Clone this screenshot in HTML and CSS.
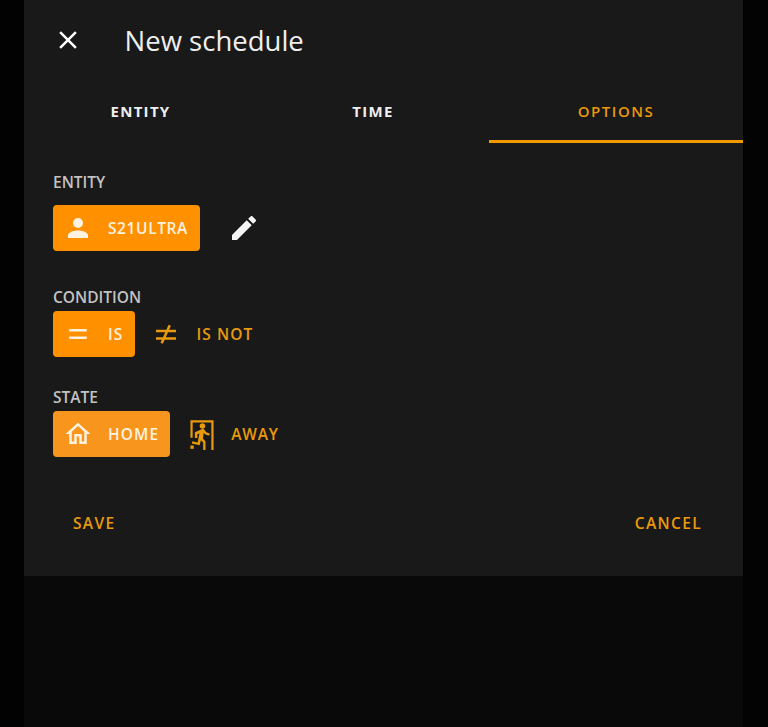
FILE: index.html
```html
<!DOCTYPE html>
<html lang="en">
<head>
    <meta charset="UTF-8">
    <meta name="viewport" content="width=device-width, initial-scale=1.0">
    <title>New schedule</title>
    <link rel="stylesheet" href="styles.css">
</head>
<body>
    <div class="dialogo">
        <header class="cabecera">
            <svg class="icono icono-cerrar" viewBox="0 0 24 24"><path d="M19,6.41L17.59,5L12,10.59L6.41,5L5,6.41L10.59,12L5,17.59L6.41,19L12,13.41L17.59,19L19,17.59L13.41,12L19,6.41Z"/></svg>
            <h1 class="titulo">New schedule</h1>
        </header>

        <nav class="pestanas">
            <div class="pestana">ENTITY</div>
            <div class="pestana">TIME</div>
            <div class="pestana activa">OPTIONS</div>
        </nav>

        <!-- Entity -->
        <div class="etiqueta etiqueta-entidad">ENTITY</div>
        <div class="fila">
            <div class="boton marcado">
                <svg class="icono" viewBox="0 0 24 24"><path d="M12,4A4,4 0 0,1 16,8A4,4 0 0,1 12,12A4,4 0 0,1 8,8A4,4 0 0,1 12,4M12,14C16.42,14 20,15.79 20,18V20H4V18C4,15.79 7.58,14 12,14Z"/></svg>
                <span class="texto-entidad">S21ULTRA</span>
            </div>
            <svg class="icono-editar" viewBox="0 0 24 24"><path d="M20.71,7.04C21.1,6.65 21.1,6 20.71,5.63L18.37,3.29C18,2.9 17.35,2.9 16.96,3.29L15.12,5.12L18.87,8.87M3,17.25V21H6.75L17.81,9.93L14.06,6.18L3,17.25Z"/></svg>
        </div>

        <!-- Condition -->
        <div class="etiqueta etiqueta-condicion">CONDITION</div>
        <div class="fila">
            <div class="boton marcado">
                <svg class="icono" viewBox="0 0 24 24"><path d="M19,10H5V8H19V10M19,16H5V14H19V16Z"/></svg>
                <span>IS</span>
            </div>
            <div class="boton">
                <svg class="icono" viewBox="0 0 24 24"><path d="M14.08,4.61L15.92,5.39L14.5,8.5H20V10.5H13.6L11.8,14.5H20V16.5H10.9L9.42,19.78L7.58,18.97L8.7,16.5H4V14.5H9.6L11.4,10.5H4V8.5H12.3L14.08,4.61Z"/></svg>
                <span>IS NOT</span>
            </div>
        </div>

        <!-- State -->
        <div class="etiqueta etiqueta-estado">STATE</div>
        <div class="fila">
            <div class="boton marcado boton-casa">
                <svg class="icono" viewBox="0 0 24 24"><path d="M12 5.69L17 10.19V18H15V12H9V18H7V10.19L12 5.69M12 3L2 12H5V20H11V14H13V20H19V12H22L12 3Z"/></svg>
                <span>HOME</span>
            </div>
            <div class="boton boton-puerta">
                <svg class="icono icono-puerta" viewBox="2 0 27 30">
                    <path d="M5 18V2H26V29H24V4H7V18Z"/>
                    <path d="M5 25H8V28H5Z"/>
                    <g transform="translate(-2.5 -2.5) scale(1.15)">
                        <circle cx="16" cy="8.5" r="2.2"/>
                        <path d="M14.5 11.5L10 13.5V18H12V15L13.6 14.4L12.2 21.5L8 20.6L7.6 22.4L13.8 23.8L14.8 19.8L16.6 21.6V27.5H18.4V20.6L16.4 18.6L17 13.8C18 15.2 19.6 16 21.6 16V14.2C20 14.2 18.8 13.4 18 12L17 10.8C16.3 10.6 15.4 11 14.5 11.5Z"/>
                    </g>
                </svg>
                <span>AWAY</span>
            </div>
        </div>

        <footer class="acciones">
            <div class="accion">SAVE</div>
            <div class="accion">CANCEL</div>
        </footer>
    </div>
</body>
</html>
```

FILE: styles.css
```css
html, body {
    height: 100%;
}

body {
    margin: 0;
    overflow: hidden;
    background-color: #090909;
    font-family: "Open Sans", "Liberation Sans", sans-serif;
    border-left: 24px solid #020202;
    border-right: 25px solid #030303;
}

.dialogo {
    height: 576px;
    background-color: #191919;
    box-sizing: border-box;
}

.cabecera {
    display: flex;
    align-items: center;
    height: 80px;
    padding-left: 28px;
    color: #fff;
}

.icono-cerrar {
    width: 32px;
    height: 32px;
    margin-left: 1px;
    fill: #f5f5f5;
}

.titulo {
    margin: 0 0 0 41.5px;
    font-size: 27.5px;
    font-weight: 400;
    color: #eeeeee;
}

.pestanas {
    display: grid;
    grid-template-columns: 233px 232px 254px;
    height: 63px;
}

.pestana {
    display: flex;
    align-items: center;
    justify-content: center;
    padding-top: 2px;
    font-size: 15px;
    font-weight: 700;
    letter-spacing: 1.3px;
    color: #eeeeee;
    border-bottom: 3px solid transparent;
}

.pestana.activa {
    color: #e99a0c;
    font-weight: 600;
    letter-spacing: 1.5px;
    border-bottom-color: #f29b00;
}

.etiqueta {
    margin-left: 29px;
    font-size: 15.5px;
    font-weight: 600;
    line-height: 18px;
    color: #c2c2c2;
}

.etiqueta-entidad {
    margin-top: 30px;
    margin-bottom: 14px;
}

.etiqueta-condicion {
    margin-top: 37px;
    margin-bottom: 5px;
}

.etiqueta-estado {
    margin-top: 31px;
    margin-bottom: 5px;
}

.fila {
    display: flex;
    align-items: center;
    gap: 6px;
    margin-left: 29px;
}

.boton {
    display: flex;
    align-items: center;
    gap: 15px;
    height: 46px;
    padding: 0 12px 0 10px;
    border-radius: 4px;
    font-size: 15.5px;
    font-weight: 600;
    letter-spacing: 1.1px;
    color: #e99a0c;
}

.boton.marcado {
    background-color: #ff9100;
    color: #fff2e0;
}

.boton-casa.marcado {
    background-color: #f8951c;
    padding-right: 11px;
}

.boton-puerta {
    gap: 14px;
    padding-left: 11px;
    letter-spacing: 0.8px;
}

.texto-entidad {
    letter-spacing: 0.6px;
}

.icono {
    flex: none;
    width: 30px;
    height: 30px;
    fill: currentColor;
}

.icono-puerta {
    height: 33px;
}

.icono-editar {
    width: 32px;
    height: 32px;
    margin-left: 22px;
    fill: #f5f5f5;
}

.acciones {
    display: flex;
    justify-content: space-between;
    margin-top: 56px;
    padding: 0 41px 0 49px;
}

.accion {
    font-size: 15.5px;
    font-weight: 600;
    line-height: 20px;
    letter-spacing: 1.35px;
    color: #e99a0c;
}
```
